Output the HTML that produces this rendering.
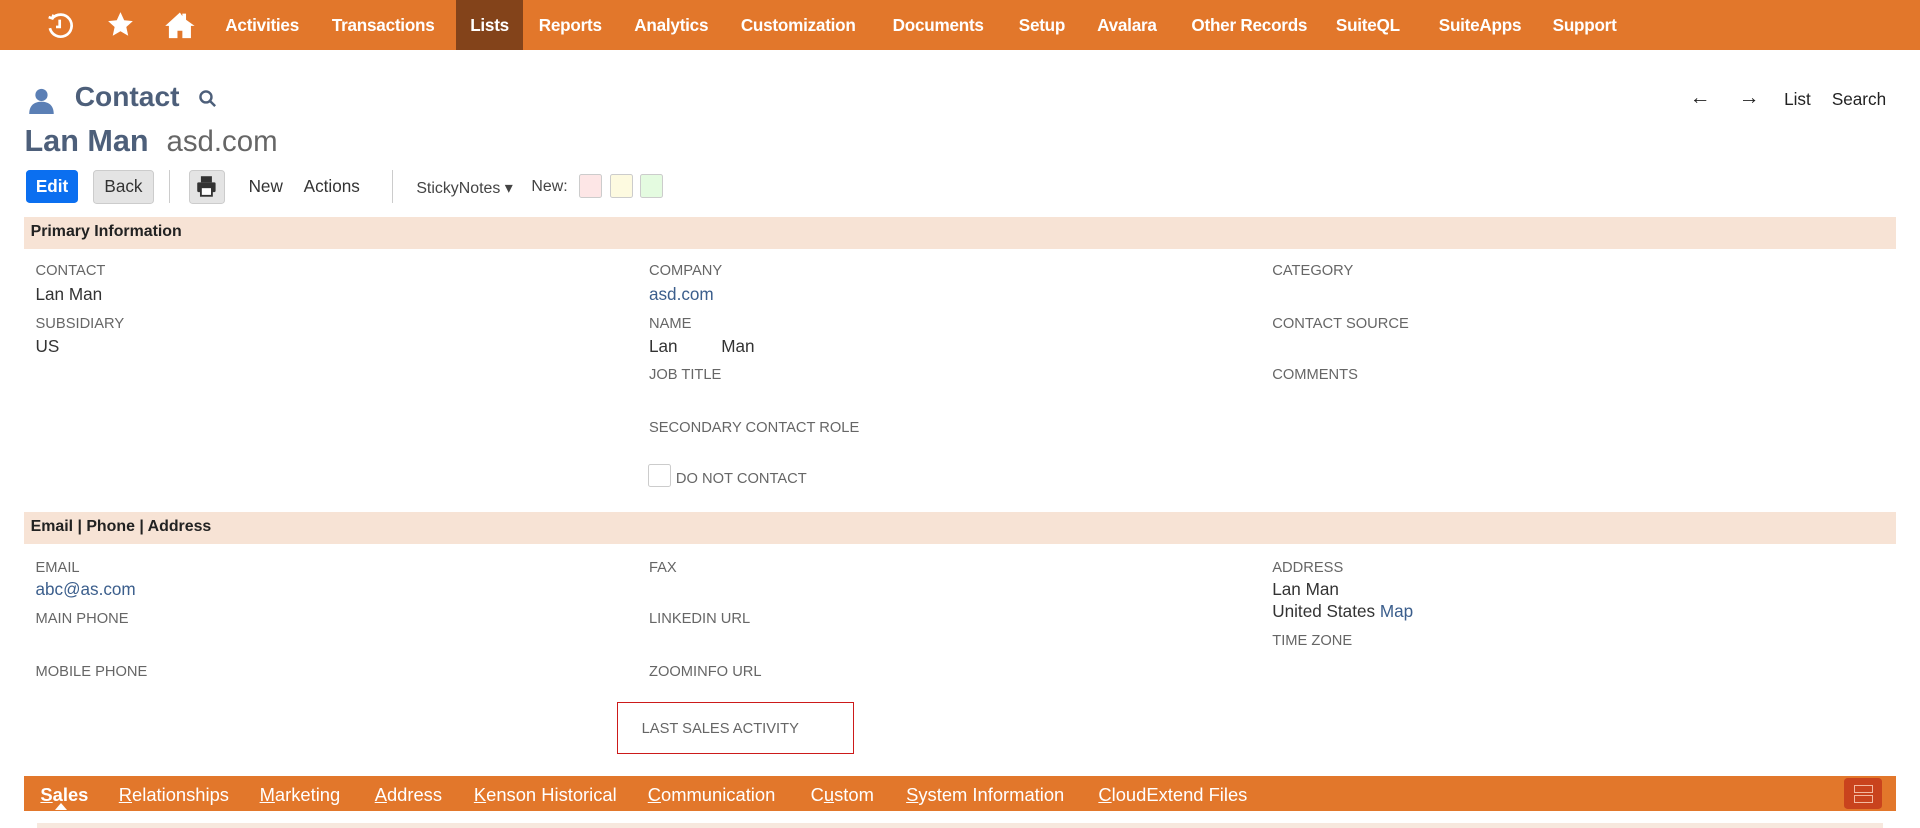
<!DOCTYPE html>
<html><head><meta charset="utf-8"><style>
html,body{margin:0;padding:0;background:#fff;}
body{width:1568px;height:676px;zoom:1.22449;overflow:hidden;position:relative;font-family:"Liberation Sans",sans-serif;}
.a{position:absolute;white-space:nowrap;}
.nav{position:absolute;left:0;top:0;width:1568px;height:41px;background:#e2772b;}
.nav .t{position:absolute;top:12px;color:#fff;font-size:14px;font-weight:bold;letter-spacing:-0.2px;}
.band{position:absolute;left:20px;width:1528px;height:26px;background:#f7e3d5;font-size:13px;font-weight:bold;color:#222;}
.band span{position:absolute;left:5px;top:5px;}
.lb{position:absolute;font-size:12px;color:#666;white-space:nowrap;}
.v{position:absolute;font-size:14px;color:#333;white-space:nowrap;}
.lnk{color:#3b5e8c;}
.tabs{position:absolute;left:20px;top:634px;width:1528px;height:28px;background:#e2772b;}
.tabs .t{position:absolute;top:6px;color:#fff;font-size:15px;}
.tabs .t u{text-decoration:underline;}
</style></head><body>
<div class="nav">
<svg class="a" style="left:37px;top:9px" width="24" height="24" viewBox="0 0 24 24" fill="none" stroke="#fff" stroke-width="2.2"><path d="M6 6 A9 9 0 1 1 4 14"/><path d="M3 5 L6 6 L7 3"/><path d="M12 7 V13 H9"/></svg>
<svg class="a" style="left:87px;top:9px" width="22" height="22" viewBox="0 0 24 24"><path fill="#fff" d="M12 1l3.3 7.2 7.7.8-5.8 5.2 1.7 7.8L12 18l-6.9 4 1.7-7.8L1 9l7.7-.8z"/></svg>
<svg class="a" style="left:134px;top:8px" width="26" height="24" viewBox="0 0 26 24"><path fill="#fff" d="M13 2L1 13h3v10h7v-6h4v6h7V13h3L18 8V3h-3v2z"/></svg>
<div class="a" style="left:372px;top:0;width:55px;height:41px;background:#83431a"></div>
<div class="t" style="left:184px">Activities</div>
<div class="t" style="left:271px">Transactions</div>
<div class="t" style="left:384px">Lists</div>
<div class="t" style="left:440px">Reports</div>
<div class="t" style="left:518px">Analytics</div>
<div class="t" style="left:605px">Customization</div>
<div class="t" style="left:729px">Documents</div>
<div class="t" style="left:832px">Setup</div>
<div class="t" style="left:896px">Avalara</div>
<div class="t" style="left:973px">Other Records</div>
<div class="t" style="left:1091px">SuiteQL</div>
<div class="t" style="left:1175px">SuiteApps</div>
<div class="t" style="left:1268px">Support</div>
</div>

<svg class="a" style="left:23px;top:71px" width="22" height="22" viewBox="0 0 22 22"><circle cx="11" cy="6.5" r="5" fill="#5b7fb5"/><path d="M1 22c0-7 4-10 10-10s10 3 10 10z" fill="#5b7fb5"/></svg>
<div class="a" style="left:61px;top:66px;font-size:23px;font-weight:bold;color:#4d5f7a">Contact</div>
<svg class="a" style="left:162px;top:73px" width="16" height="16" viewBox="0 0 16 16" fill="none" stroke="#4d5f7a" stroke-width="2"><circle cx="6.5" cy="6.5" r="4.5"/><path d="M10 10l4 4"/></svg>
<div class="a" style="left:1380px;top:70px;font-size:17px;color:#222;font-weight:bold">&#8592;</div>
<div class="a" style="left:1420px;top:70px;font-size:17px;color:#222;font-weight:bold">&#8594;</div>
<div class="a" style="left:1457px;top:73px;font-size:14px;color:#222">List</div>
<div class="a" style="left:1496px;top:73px;font-size:14px;color:#222">Search</div>

<div class="a" style="left:20px;top:101px;font-size:25px;font-weight:bold;color:#4d5f7a">Lan Man</div>
<div class="a" style="left:136px;top:102px;font-size:24px;color:#666">asd.com</div>

<div class="a" style="left:21px;top:139px;width:43px;height:27px;background:#0b6ff0;border-radius:3px;color:#fff;font-size:14px;font-weight:bold;text-align:center;line-height:27px">Edit</div>
<div class="a" style="left:76px;top:139px;width:48px;height:26px;background:#e4e4e4;border:1px solid #ccc;border-radius:3px;color:#333;font-size:14px;text-align:center;line-height:26px">Back</div>
<div class="a" style="left:138px;top:139px;width:1px;height:27px;background:#ccc"></div>
<div class="a" style="left:154px;top:139px;width:28px;height:26px;background:#e4e4e4;border:1px solid #ccc;border-radius:3px"></div>
<svg class="a" style="left:160px;top:143px" width="17" height="18" viewBox="0 0 17 18"><rect x="4" y="1" width="9" height="5" fill="#333"/><rect x="1" y="6" width="15" height="8" rx="1" fill="#333"/><rect x="4" y="10" width="9" height="7" fill="#fff" stroke="#333" stroke-width="1.5"/></svg>
<div class="a" style="left:203px;top:144px;font-size:14px;color:#333">New</div>
<div class="a" style="left:248px;top:144px;font-size:14px;color:#333">Actions</div>
<div class="a" style="left:320px;top:139px;width:1px;height:27px;background:#ccc"></div>
<div class="a" style="left:340px;top:145px;font-size:13px;color:#444">StickyNotes &#9662;</div>
<div class="a" style="left:434px;top:145px;font-size:13px;color:#444">New:</div>
<div class="a" style="left:473px;top:142px;width:17px;height:18px;background:#fde6e6;border:1px solid #ccc;border-radius:2px"></div>
<div class="a" style="left:498px;top:142px;width:17px;height:18px;background:#fdfae0;border:1px solid #ccc;border-radius:2px"></div>
<div class="a" style="left:523px;top:142px;width:17px;height:18px;background:#e4fbe0;border:1px solid #ccc;border-radius:2px"></div>

<div class="band" style="top:177px"><span>Primary Information</span></div>
<div class="lb" style="left:29px;top:215px">CONTACT</div><div class="v" style="left:29px;top:232px">Lan Man</div>
<div class="lb" style="left:29px;top:258px">SUBSIDIARY</div><div class="v" style="left:29px;top:274px">US</div>
<div class="lb" style="left:530px;top:215px">COMPANY</div><div class="v lnk" style="left:530px;top:232px">asd.com</div>
<div class="lb" style="left:530px;top:258px">NAME</div><div class="v" style="left:530px;top:274px">Lan</div><div class="v" style="left:589px;top:274px">Man</div>
<div class="lb" style="left:530px;top:300px">JOB TITLE</div>
<div class="lb" style="left:530px;top:343px">SECONDARY CONTACT ROLE</div>
<div class="a" style="left:529px;top:379px;width:17px;height:17px;border:1px solid #ccc;border-radius:2px"></div>
<div class="lb" style="left:552px;top:385px">DO NOT CONTACT</div>
<div class="lb" style="left:1039px;top:215px">CATEGORY</div>
<div class="lb" style="left:1039px;top:258px">CONTACT SOURCE</div>
<div class="lb" style="left:1039px;top:300px">COMMENTS</div>

<div class="band" style="top:418px"><span>Email | Phone | Address</span></div>
<div class="lb" style="left:29px;top:457px">EMAIL</div><div class="v lnk" style="left:29px;top:473px">abc@as.com</div>
<div class="lb" style="left:29px;top:499px">MAIN PHONE</div>
<div class="lb" style="left:29px;top:542px">MOBILE PHONE</div>
<div class="lb" style="left:530px;top:457px">FAX</div>
<div class="lb" style="left:530px;top:499px">LINKEDIN URL</div>
<div class="lb" style="left:530px;top:542px">ZOOMINFO URL</div>
<div class="a" style="left:504px;top:573px;width:192px;height:41px;border:1.5px solid #cc1a1a"></div>
<div class="lb" style="left:524px;top:589px">LAST SALES ACTIVITY</div>
<div class="lb" style="left:1039px;top:457px">ADDRESS</div>
<div class="v" style="left:1039px;top:473px">Lan Man</div>
<div class="v" style="left:1039px;top:491px">United States <span class="lnk">Map</span></div>
<div class="lb" style="left:1039px;top:517px">TIME ZONE</div>

<div class="tabs">
<div class="t" style="left:13px;font-weight:bold"><u>S</u>ales</div>
<div class="t" style="left:77px"><u>R</u>elationships</div>
<div class="t" style="left:192px"><u>M</u>arketing</div>
<div class="t" style="left:286px"><u>A</u>ddress</div>
<div class="t" style="left:367px"><u>K</u>enson Historical</div>
<div class="t" style="left:509px"><u>C</u>ommunication</div>
<div class="t" style="left:642px">C<u>u</u>stom</div>
<div class="t" style="left:720px"><u>S</u>ystem Information</div>
<div class="t" style="left:877px"><u>C</u>loudExtend Files</div>
<div class="a" style="left:25px;top:22px;width:0;height:0;border-left:5px solid transparent;border-right:5px solid transparent;border-bottom:6px solid #fff"></div>
<div class="a" style="left:1486px;top:1px;width:31px;height:26px;background:#c9431d;border-radius:3px"></div>
<div class="a" style="left:1494px;top:7px;width:14px;height:5px;border:1.5px solid #f3b9a0"></div>
<div class="a" style="left:1494px;top:15px;width:14px;height:5px;border:1.5px solid #f3b9a0"></div>
</div>
<div class="a" style="left:30px;top:672px;width:1508px;height:4px;background:#f7e8de"></div>
</body></html>
